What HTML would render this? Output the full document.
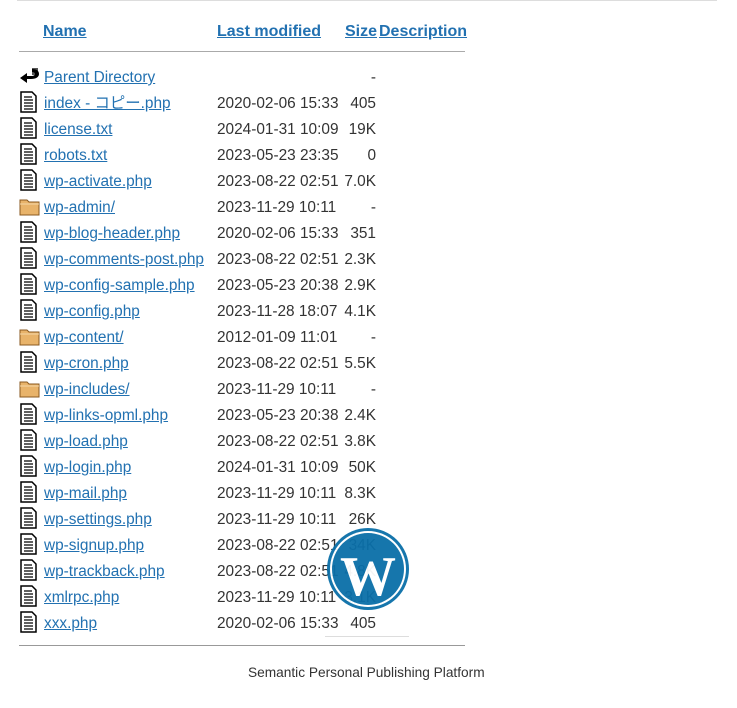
<!DOCTYPE html>
<html><head><meta charset="utf-8"><style>
body{margin:0;width:737px;height:708px;background:#fff;font-family:"Liberation Sans","Noto Sans CJK JP",sans-serif;font-size:15.4px;color:#333;position:relative;overflow:hidden}
a{color:#2271b1;text-decoration:underline}
.r{position:absolute;left:0;height:0;width:480px}
.r svg{position:absolute;left:19px;top:-11px}
.n{position:absolute;left:44px;top:-8px;white-space:nowrap;line-height:20px}
.d{position:absolute;left:217px;top:-8px;white-space:nowrap;line-height:20px}
.s{position:absolute;right:104px;top:-8px;text-align:right;line-height:20px}
.h{position:absolute;top:22px;font-weight:bold;color:#2271b1;text-decoration:underline;font-size:16px;line-height:20px}
</style></head><body>
<div style="position:absolute;left:17px;top:0;width:700px;height:1px;background:#ddd"></div>
<span class="h" style="left:43px">Name</span>
<span class="h" style="left:217px">Last modified</span>
<span class="h" style="left:345px">Size</span>
<span class="h" style="left:379px">Description</span>
<div style="position:absolute;left:19px;top:51px;width:446px;height:1px;background:#aaa"></div>
<svg width="0" height="0" style="position:absolute"><defs>
<g id="f"><path d="M2 1h11l4 4v16H2z" fill="#fff" stroke="#000" stroke-width="1.5"/><path d="M5 6h8M5 9h9M5 12h9M5 15h9M5 18h9" stroke="#000" stroke-width="1.2"/></g>
<g id="d"><path d="M1 5h7l2 2h10v13H1z" fill="#e8b36a" stroke="#8a5a20" stroke-width="1"/><path d="M1 9h19" stroke="#f5d7a8"/></g>
</defs></svg>
<div class="r" style="top:76px"><svg width="22" height="22"><path d="M13 3h6v7h-6z" fill="#555"/><path d="M13 4c5 0 7 2 7 5s-3 5-8 5H8v4L1 13l7-5v3h4c3 0 4-1 4-2s-1-2-3-2z" fill="#000"/></svg><a class="n">Parent Directory</a><span class="s">-</span></div>
<div class="r" style="top:102px"><svg width="22" height="22"><use href="#f"/></svg><a class="n">index - コピー.php</a><span class="d">2020-02-06 15:33</span><span class="s">405</span></div>
<div class="r" style="top:128px"><svg width="22" height="22"><use href="#f"/></svg><a class="n">license.txt</a><span class="d">2024-01-31 10:09</span><span class="s">19K</span></div>
<div class="r" style="top:154px"><svg width="22" height="22"><use href="#f"/></svg><a class="n">robots.txt</a><span class="d">2023-05-23 23:35</span><span class="s">0</span></div>
<div class="r" style="top:180px"><svg width="22" height="22"><use href="#f"/></svg><a class="n">wp-activate.php</a><span class="d">2023-08-22 02:51</span><span class="s">7.0K</span></div>
<div class="r" style="top:206px"><svg width="22" height="22"><use href="#d"/></svg><a class="n">wp-admin/</a><span class="d">2023-11-29 10:11</span><span class="s">-</span></div>
<div class="r" style="top:232px"><svg width="22" height="22"><use href="#f"/></svg><a class="n">wp-blog-header.php</a><span class="d">2020-02-06 15:33</span><span class="s">351</span></div>
<div class="r" style="top:258px"><svg width="22" height="22"><use href="#f"/></svg><a class="n">wp-comments-post.php</a><span class="d">2023-08-22 02:51</span><span class="s">2.3K</span></div>
<div class="r" style="top:284px"><svg width="22" height="22"><use href="#f"/></svg><a class="n">wp-config-sample.php</a><span class="d">2023-05-23 20:38</span><span class="s">2.9K</span></div>
<div class="r" style="top:310px"><svg width="22" height="22"><use href="#f"/></svg><a class="n">wp-config.php</a><span class="d">2023-11-28 18:07</span><span class="s">4.1K</span></div>
<div class="r" style="top:336px"><svg width="22" height="22"><use href="#d"/></svg><a class="n">wp-content/</a><span class="d">2012-01-09 11:01</span><span class="s">-</span></div>
<div class="r" style="top:362px"><svg width="22" height="22"><use href="#f"/></svg><a class="n">wp-cron.php</a><span class="d">2023-08-22 02:51</span><span class="s">5.5K</span></div>
<div class="r" style="top:388px"><svg width="22" height="22"><use href="#d"/></svg><a class="n">wp-includes/</a><span class="d">2023-11-29 10:11</span><span class="s">-</span></div>
<div class="r" style="top:414px"><svg width="22" height="22"><use href="#f"/></svg><a class="n">wp-links-opml.php</a><span class="d">2023-05-23 20:38</span><span class="s">2.4K</span></div>
<div class="r" style="top:440px"><svg width="22" height="22"><use href="#f"/></svg><a class="n">wp-load.php</a><span class="d">2023-08-22 02:51</span><span class="s">3.8K</span></div>
<div class="r" style="top:466px"><svg width="22" height="22"><use href="#f"/></svg><a class="n">wp-login.php</a><span class="d">2024-01-31 10:09</span><span class="s">50K</span></div>
<div class="r" style="top:492px"><svg width="22" height="22"><use href="#f"/></svg><a class="n">wp-mail.php</a><span class="d">2023-11-29 10:11</span><span class="s">8.3K</span></div>
<div class="r" style="top:518px"><svg width="22" height="22"><use href="#f"/></svg><a class="n">wp-settings.php</a><span class="d">2023-11-29 10:11</span><span class="s">26K</span></div>
<div class="r" style="top:544px"><svg width="22" height="22"><use href="#f"/></svg><a class="n">wp-signup.php</a><span class="d">2023-08-22 02:51</span><span class="s">34K</span></div>
<div class="r" style="top:570px"><svg width="22" height="22"><use href="#f"/></svg><a class="n">wp-trackback.php</a><span class="d">2023-08-22 02:51</span><span class="s">4.8K</span></div>
<div class="r" style="top:596px"><svg width="22" height="22"><use href="#f"/></svg><a class="n">xmlrpc.php</a><span class="d">2023-11-29 10:11</span><span class="s">3.1K</span></div>
<div class="r" style="top:622px"><svg width="22" height="22"><use href="#f"/></svg><a class="n">xxx.php</a><span class="d">2020-02-06 15:33</span><span class="s">405</span></div>
<svg style="position:absolute;left:326px;top:527px;opacity:0.95" width="84" height="84" viewBox="0 0 84 84">
<circle cx="42" cy="42" r="41" fill="#0a6fa8"/><circle cx="42" cy="42" r="38" fill="#fff"/><circle cx="42" cy="42" r="36" fill="#0a6fa8"/>
<text x="42" y="68" text-anchor="middle" font-family="Liberation Serif,serif" font-weight="bold" font-size="56" fill="#fff">W</text>
</svg>
<div style="position:absolute;left:325px;top:636px;width:84px;height:1px;background:#ddd"></div>
<div style="position:absolute;left:19px;top:645px;width:446px;height:1px;background:#999"></div>
<div style="position:absolute;left:248px;top:665px;font-size:13.7px;color:#333">Semantic Personal Publishing Platform</div>
</body></html>
